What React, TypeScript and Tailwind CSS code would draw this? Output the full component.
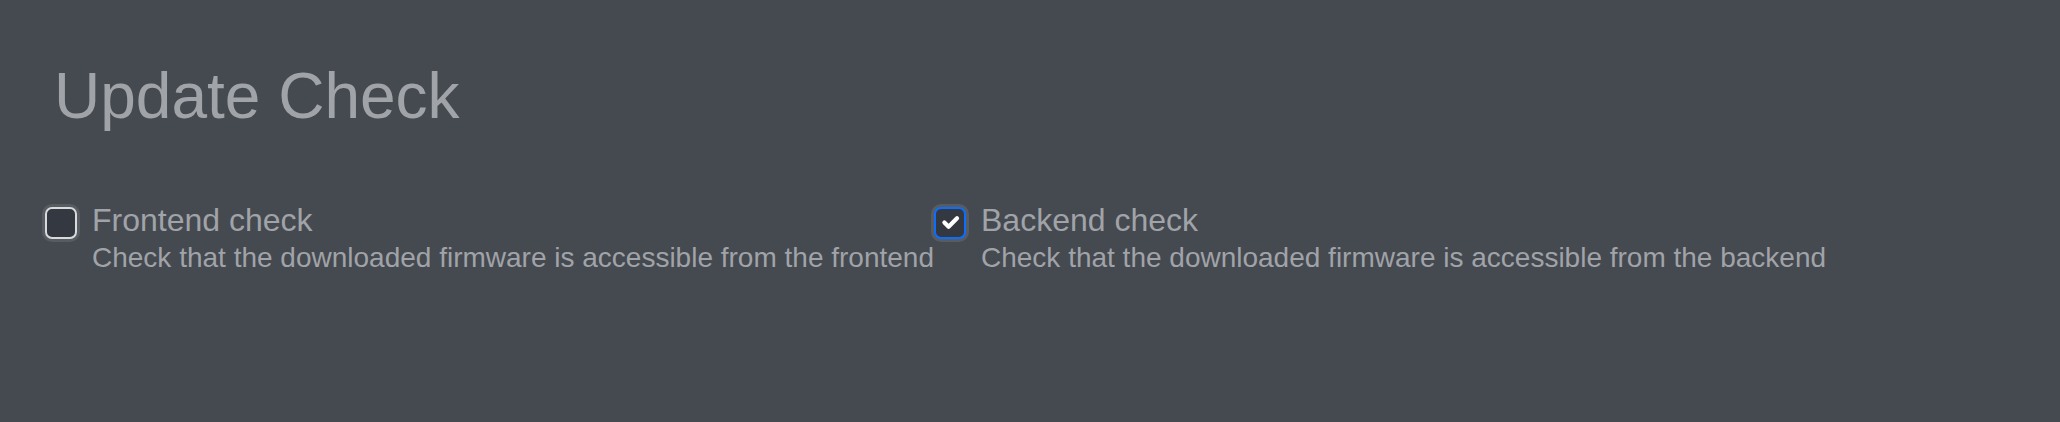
const checks = [
  {
    id: "frontend",
    label: "Frontend check",
    help: "Check that the downloaded firmware is accessible from the frontend",
    checked: false,
  },
  {
    id: "backend",
    label: "Backend check",
    help: "Check that the downloaded firmware is accessible from the backend",
    checked: true,
  },
];

function CheckBox({ checked }: { checked: boolean }) {
  return (
    <span
      className={`mt-[7px] flex h-[32px] w-[32px] shrink-0 items-center justify-center rounded-[7px] border-2 bg-[#343840] ring-[3px] ring-[#575b62] ${
        checked ? "border-[#0d6efd]" : "border-[#d9dadc]"
      }`}
    >
      {checked && (
        <svg viewBox="0 0 20 20" className="h-[29px] w-[29px]">
          <path
            d="M6 10l3 3l6-6"
            fill="none"
            stroke="#fff"
            strokeWidth="3"
            strokeLinecap="round"
            strokeLinejoin="round"
          />
        </svg>
      )}
    </span>
  );
}

export default function App() {
  return (
    <div
      className="h-[422px] w-full bg-[#454950] text-[#a0a3a8]"
      style={{ fontFamily: '"Liberation Sans", Arial, sans-serif' }}
    >
      <h1 className="pl-[54px] pt-[58px] text-[64px] leading-[1.2]">Update Check</h1>

      <div className="mt-[65px] flex pl-[45px]">
        {checks.map((c) => (
          <label key={c.id} className="flex gap-[15px]">
            <CheckBox checked={c.checked} />
            <span className="flex flex-col">
              <span className="text-[32px] leading-[40px]">{c.label}</span>
              <span className="text-[28px] leading-[35px]">{c.help}</span>
            </span>
          </label>
        ))}
      </div>
    </div>
  );
}
